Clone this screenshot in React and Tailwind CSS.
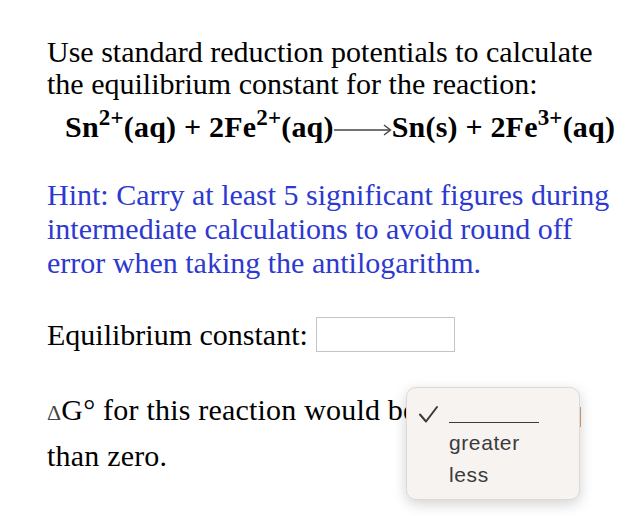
import React from "react";

const serif = { fontFamily: '"Liberation Serif", "Times New Roman", serif' };

function Sup({ children }) {
  return <sup className="text-[23px] relative -top-[12px] font-bold">{children}</sup>;
}

export default function App() {
  return (
    <div className="relative w-[634px] h-[516px] bg-white overflow-hidden text-black" style={serif}>
      <div className="pl-[47px] pt-[36px]">
        {/* Question */}
        <p className="text-[30px] leading-[32px] whitespace-nowrap">
          Use standard reduction potentials to calculate
          <br />
          the equilibrium constant for the reaction:
        </p>

        {/* Equation */}
        <div className="mt-[9px] ml-[18px] flex items-end font-bold text-[30px] leading-[36px] whitespace-nowrap tracking-[0.2px]">
          <span>
            Sn<Sup>2+</Sup>(aq) + 2Fe<Sup>2+</Sup>(aq)
          </span>
          <svg width="58" height="36" viewBox="0 0 58 36" className="shrink-0">
            <line x1="0" y1="21" x2="56" y2="21" stroke="#444" strokeWidth="1.6" />
            <path d="M50 16 L56.5 21 L50 26" fill="none" stroke="#444" strokeWidth="1.4" />
          </svg>
          <span>
            Sn(s) + 2Fe<Sup>3+</Sup>(aq)
          </span>
        </div>

        {/* Hint */}
        <p className="mt-[33px] text-[30px] leading-[34px] text-[#2d39d0] whitespace-nowrap">
          Hint: Carry at least 5 significant figures during
          <br />
          intermediate calculations to avoid round off
          <br />
          error when taking the antilogarithm.
        </p>

        {/* Equilibrium constant */}
        <div className="mt-[37px] flex items-center gap-[8px] text-[30px] leading-[34px]">
          <span>Equilibrium constant:</span>
          <input
            type="text"
            className="w-[139px] h-[35px] border border-[#c4c4c4] bg-white outline-none"
          />
        </div>

        {/* Delta G */}
        <p className="mt-[36px] text-[30px] leading-[43px] whitespace-nowrap tracking-[0.2px]">
          <span className="text-[22px] text-[#444]">Δ</span>G° for this reaction would be
          <br />
          than zero.
        </p>
      </div>

      {/* Select popup */}
      <div className="absolute left-[579px] top-[407px] w-[2px] h-[20px] bg-[#d9a27a]" />
      <div
        className="absolute left-[406px] top-[387px] w-[174px] h-[113px] rounded-[10px] border border-[#dcd9d6] bg-[#f6f3f1] shadow-[0_4px_14px_rgba(0,0,0,0.18)] text-[#3b3b3b]"
        style={{ fontFamily: '"Liberation Sans", Arial, sans-serif' }}
      >
        <div className="flex items-end pl-[10px] pt-[15px] h-[36px]">
          <svg width="24" height="20" viewBox="0 0 24 20" className="shrink-0">
            <path d="M3 10.5 L9 17.5 L20 3" fill="none" stroke="#3a3a3a" strokeWidth="2" strokeLinecap="round" strokeLinejoin="round" />
          </svg>
          <div className="ml-[8px] mb-[1px] w-[90px] h-[1.5px] bg-[#3b3b3b]" />
        </div>
        <div className="pl-[42px] pt-[3px] text-[21px] leading-[32px] tracking-[0.6px]">
          <div>greater</div>
          <div>less</div>
        </div>
      </div>
    </div>
  );
}
